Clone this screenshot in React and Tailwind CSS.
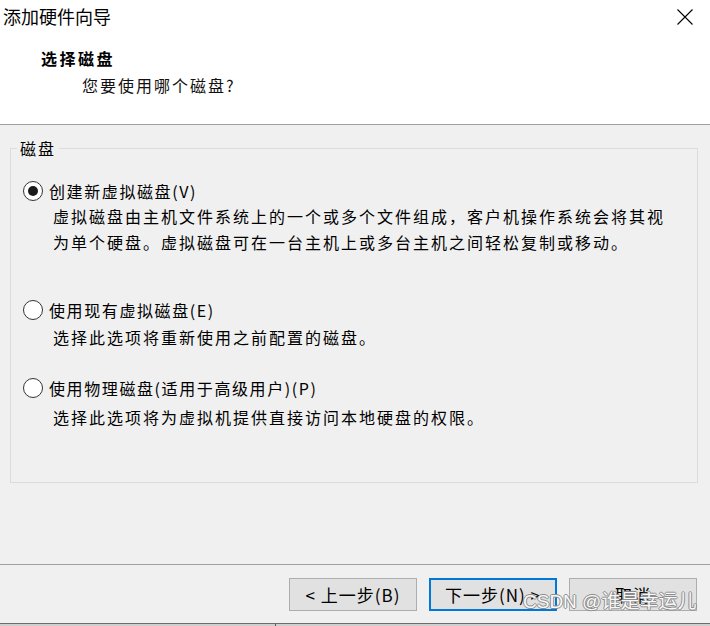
const FONT = "font-['Noto_Sans_CJK_SC','Noto_Sans',sans-serif]";

const OPTIONS = [
  {
    key: "new",
    label: "创建新虚拟磁盘(V)",
    desc: [
      "虚拟磁盘由主机文件系统上的一个或多个文件组成，客户机操作系统会将其视",
      "为单个硬盘。虚拟磁盘可在一台主机上或多台主机之间轻松复制或移动。",
    ],
    checked: true,
    rowMt: "mt-0",
    descMt: "mt-[2px]",
  },
  {
    key: "existing",
    label: "使用现有虚拟磁盘(E)",
    desc: ["选择此选项将重新使用之前配置的磁盘。"],
    checked: false,
    rowMt: "mt-[45px]",
    descMt: "mt-[4px]",
  },
  {
    key: "physical",
    label: "使用物理磁盘(适用于高级用户)(P)",
    desc: ["选择此选项将为虚拟机提供直接访问本地硬盘的权限。"],
    checked: false,
    rowMt: "mt-[28px]",
    descMt: "mt-[6px]",
  },
];

// 单选框：选中时中间一个黑点
function Radio({ checked }) {
  return (
    <span className="w-[20px] h-[20px] rounded-full border-[1.5px] border-[#333333] bg-white flex items-center justify-center shrink-0">
      {checked && <span className="w-[10px] h-[10px] rounded-full bg-[#1a1a1a]" />}
    </span>
  );
}

function Option({ opt }) {
  return (
    <div className={opt.rowMt}>
      <div className="flex items-center h-[20px]">
        <Radio checked={opt.checked} />
        <span className="ml-[6px] text-[16px] leading-[20px] tracking-[1.6px] text-black">{opt.label}</span>
      </div>
      <div className={`${opt.descMt} ml-[30px] text-[16px] leading-[26px] tracking-[2px] text-black`}>
        {opt.desc.map((line) => (
          <div key={line} className="whitespace-nowrap">
            {line}
          </div>
        ))}
      </div>
    </div>
  );
}

function Button({ children, focused }) {
  return (
    <button
      className={`w-[128px] h-[33px] bg-[#e1e1e1] text-[17px] tracking-[1px] text-black flex items-center justify-center ${
        focused ? "border-2 border-[#0078d7]" : "border border-[#adadad]"
      }`}
    >
      {children}
    </button>
  );
}

export default function App() {
  return (
    <div className={`relative w-[710px] h-[626px] bg-[#f0f0f0] overflow-hidden flex flex-col ${FONT}`}>
      {/* 顶部白色标题区 */}
      <div className="h-[125px] shrink-0 bg-white border-b border-[#a0a0a0] flex justify-between">
        <div className="pt-[4px]">
          <div className="pl-[3px] text-[18px] leading-[24px] text-black">添加硬件向导</div>
          <div className="mt-[20px] pl-[41px] text-[16px] leading-[20px] font-bold tracking-[2.5px] text-black">选择磁盘</div>
          <div className="mt-[7px] pl-[82px] text-[16px] leading-[20px] tracking-[2px] text-[#111111]">您要使用哪个磁盘?</div>
        </div>
        <div className="pt-[9px] pr-[17px]">
          <svg width="16" height="16" viewBox="0 0 16 16" className="text-black">
            <path d="M0.5 0.5 L15.5 15.5 M15.5 0.5 L0.5 15.5" stroke="currentColor" strokeWidth="1.1" fill="none" />
          </svg>
        </div>
      </div>

      {/* 分组框 */}
      <div className="h-[439px] shrink-0">
        <fieldset className="mt-[13px] ml-[10px] w-[688px] h-[345px] border border-[#dcdcdc]">
          <legend className="ml-[6px] px-[3px] text-[16px] leading-[20px] tracking-[2px] text-black">磁盘</legend>
          <div className="pl-[12px] pt-[23px]">
            {OPTIONS.map((opt) => (
              <Option key={opt.key} opt={opt} />
            ))}
          </div>
        </fieldset>
      </div>

      {/* 底部按钮 */}
      <div className="h-[59px] shrink-0 border-t border-[#a0a0a0] flex justify-end items-start pt-[13px] pr-[13px] gap-[12px]">
        <Button>&lt; 上一步(B)</Button>
        <Button focused>下一步(N) &gt;</Button>
        <Button>取消</Button>
      </div>

      <div className="h-[3px] shrink-0 border-t border-[#6d6d6d] bg-[#cfcfcf] flex">
        <div className="ml-[275px] w-px h-full bg-[#5a5a5a]" />
      </div>

      {/* 水印 */}
      <div className="absolute left-[523px] top-[590px] text-[19px] leading-[24px] text-[#f8f8f8] font-['Liberation_Sans','Noto_Sans_CJK_SC',sans-serif] [text-shadow:1px_0_0_#8c8c8c,-1px_0_0_#8c8c8c,0_1px_0_#8c8c8c,0_-1px_0_#8c8c8c] pointer-events-none">
        CSDN @谁是幸运儿
      </div>
    </div>
  );
}
